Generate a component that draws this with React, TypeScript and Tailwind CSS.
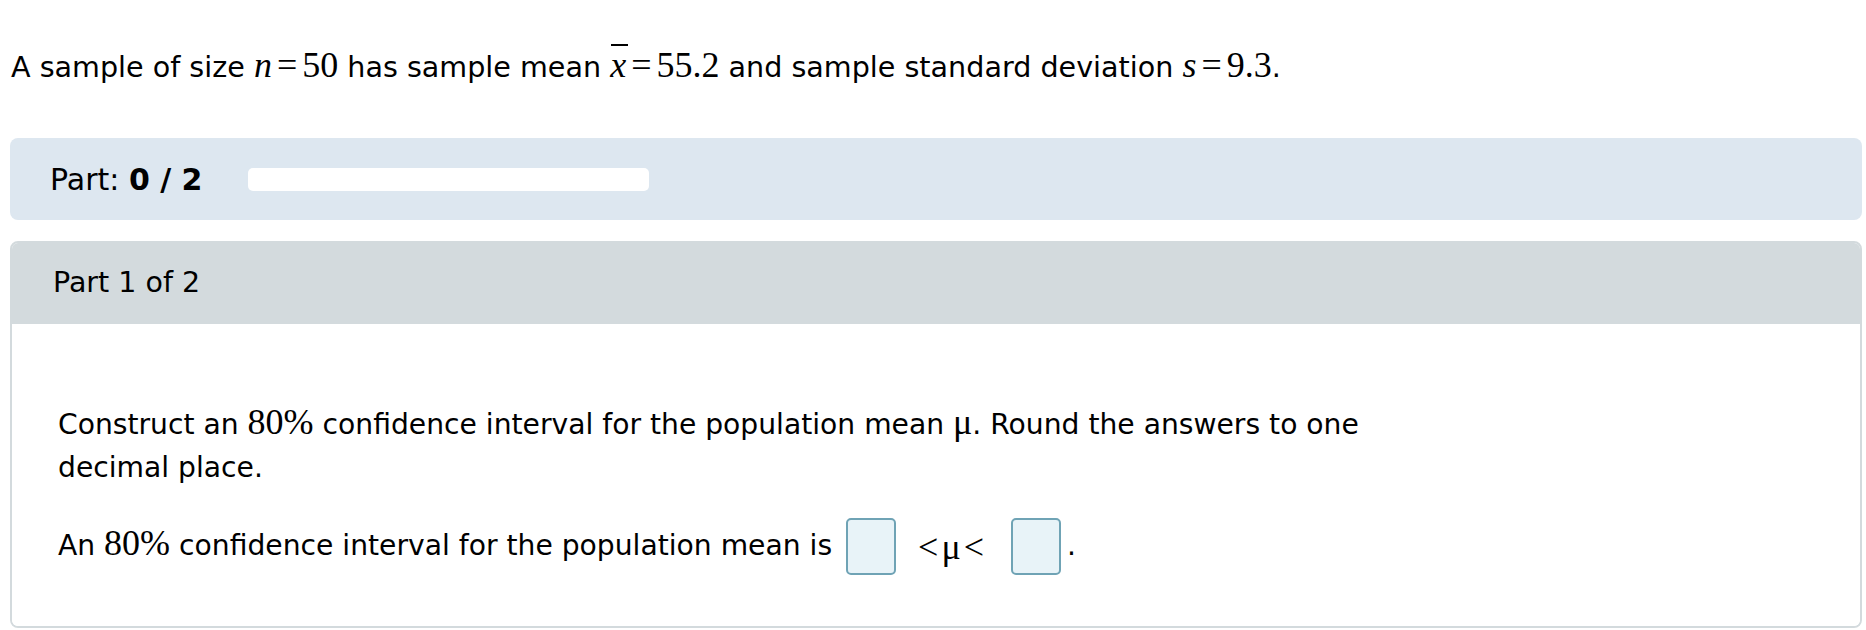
const sans = { fontFamily: '"DejaVu Sans", Verdana, sans-serif' }

function M({ children, italic }: { children: React.ReactNode; italic?: boolean }) {
  return (
    <span
      className={`font-['Liberation_Serif',serif] text-[36px] leading-none ${italic ? 'italic' : ''}`}
    >
      {children}
    </span>
  )
}

function Eq() {
  return <span className="font-['Liberation_Serif',serif] text-[36px] leading-none mx-[5px]">=</span>
}

function AnswerBox() {
  return (
    <span className="inline-block align-middle w-[50px] h-[57px] rounded-[5px] border-2 border-[#6fa3b5] bg-[#e8f3f8]"></span>
  )
}

export default function App() {
  return (
    <div className="min-h-screen bg-white text-black pl-[10px] pr-[4px]" style={sans}>
      <p className="pt-[46px] text-[28.6px] leading-[42px] pl-[1px]">
        A sample of size <M italic>n</M>
        <Eq />
        <M>50</M> has sample mean{' '}
        <span className="relative inline-block">
          <span className="absolute left-[1px] right-[-2px] top-[-2px] h-[2px] bg-black"></span>
          <M italic>x</M>
        </span>
        <Eq />
        <M>55.2</M> and sample standard deviation <M italic>s</M>
        <Eq />
        <M>9.3</M>.
      </p>

      <div className="mt-[50px] h-[82px] rounded-[8px] bg-[#dde7f0] flex items-center pl-[40px]">
        <span className="text-[30px] w-[198px] shrink-0">
          Part: <span className="font-bold whitespace-pre">0 / 2</span>
        </span>
        <div className="w-[401px] h-[23px] rounded-[5px] bg-white"></div>
      </div>

      <div className="mt-[21px] h-[387px] rounded-[8px] border-2 border-[#d3dadd] overflow-hidden flex flex-col">
        <div className="h-[81px] shrink-0 bg-[#d3dadd] flex items-center pl-[41px]">
          <span className="text-[28.5px]">Part 1 of 2</span>
        </div>
        <div className="flex-1 bg-white pl-[46px] pt-[79px]">
          <p className="text-[28.2px] leading-[43px]">
            Construct an <M>80%</M> confidence interval for the population mean <M>μ</M>. Round
            the answers to one
            <br />
            decimal place.
          </p>
          <div className="mt-[29px] flex items-center text-[28.2px]">
            <span>
              An <M>80%</M> confidence interval for the population mean is
            </span>
            <span className="ml-[14px] flex">
              <AnswerBox />
            </span>
            <span className="ml-[22px] mr-[27px] font-['Liberation_Serif',serif] text-[36px]">
              &lt;<span className="mx-[3px]">μ</span>&lt;
            </span>
            <AnswerBox />
            <span className="ml-[6px]">.</span>
          </div>
        </div>
      </div>
    </div>
  )
}
